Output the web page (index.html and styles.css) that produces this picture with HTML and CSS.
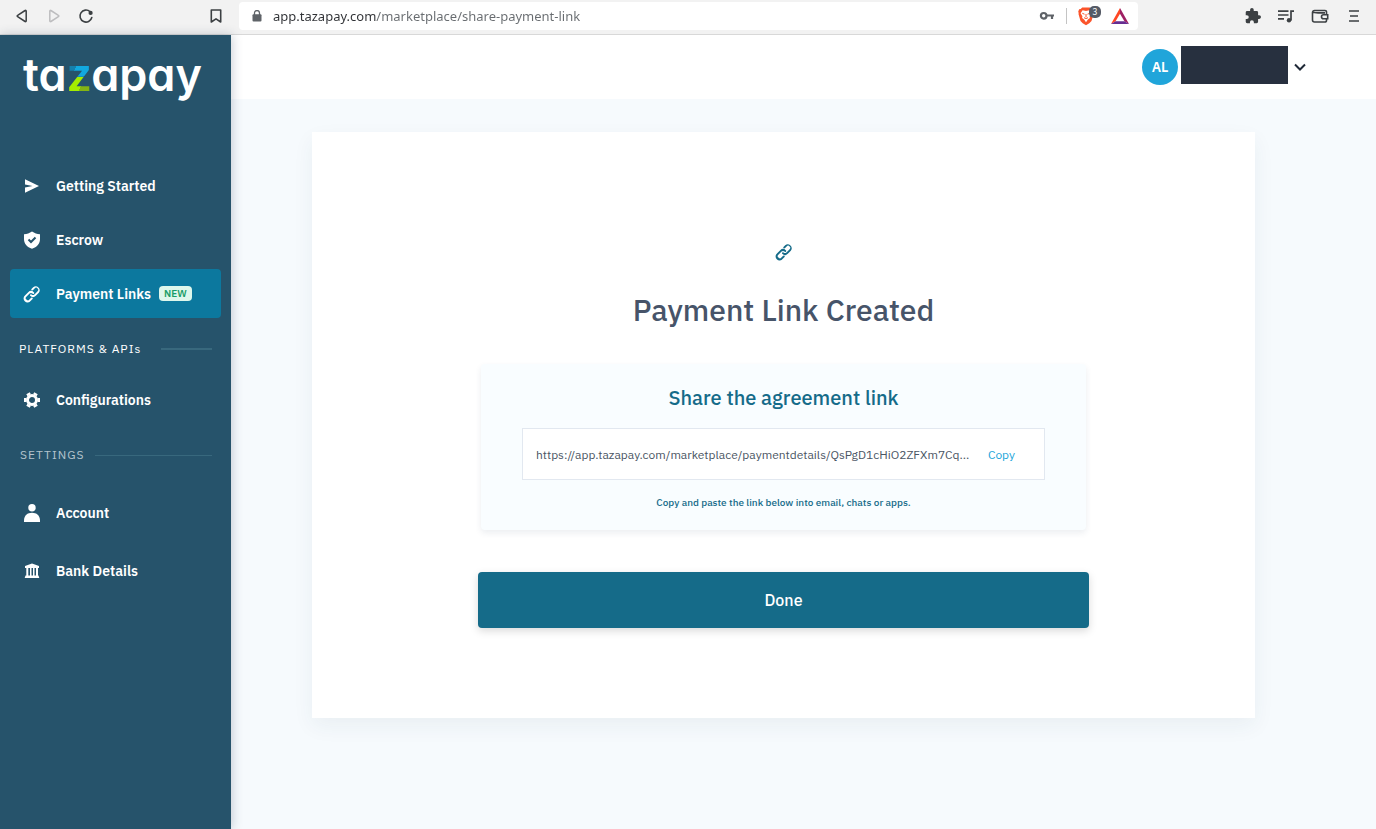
FILE: index.html
```
<!DOCTYPE html>
<html lang="en">
<head>
  <meta charset="UTF-8" />
  <meta name="viewport" content="width=device-width, initial-scale=1.0" />
  <title>Share Payment Link | Tazapay</title>
  <link rel="stylesheet" href="styles.css">
</head>
<body>
  <div class="browser-bar">
    <div class="browser-nav">
      <button type="button" aria-label="Back">
        <svg width="16" height="16" viewBox="0 0 16 16" fill="none" stroke="#3c4043" stroke-width="1.5" stroke-linejoin="round"><path d="M12.2 3v10a.7.7 0 0 1-1.1.5L3.6 8.7a.8.8 0 0 1 0-1.4l7.5-4.8a.7.7 0 0 1 1.1.5z"/></svg>
      </button>
      <button type="button" aria-label="Forward">
        <svg width="16" height="16" viewBox="0 0 16 16" fill="none" stroke="#bdbdbf" stroke-width="1.5" stroke-linejoin="round"><path d="M3.8 3v10a.7.7 0 0 0 1.1.5l7.5-4.8a.8.8 0 0 0 0-1.4L4.9 2.5a.7.7 0 0 0-1.1.5z"/></svg>
      </button>
      <button type="button" aria-label="Reload">
        <svg width="16" height="16" viewBox="0 0 16 16" fill="none"><path d="M13.8 9.5A6 6 0 1 1 12 3.6" stroke="#3c4043" stroke-width="1.6" stroke-linecap="round"/><circle cx="12.6" cy="4.9" r="2.1" fill="#3c4043"/></svg>
      </button>
    </div>
    <button type="button" class="bookmark" aria-label="Bookmark">
      <svg width="16" height="16" viewBox="0 0 16 16" fill="none" stroke="#3c4043" stroke-width="1.6" stroke-linejoin="round"><path d="M3.3 2h9.4v12L8 10.8 3.3 14z"/></svg>
    </button>
    <div class="address-bar">
      <svg width="10" height="12" viewBox="0 0 10 12"><path d="M2.5 5V3a2.5 2.5 0 0 1 5 0v2" fill="none" stroke="#5f6368" stroke-width="1.3"/><rect x=".5" y="4.3" width="9" height="7.2" rx="1" fill="#5f6368"/></svg>
      <input type="text" class="address" aria-label="Address" value="app.tazapay.com/marketplace/share-payment-link">
      <button type="button" aria-label="Saved passwords">
        <svg width="16" height="16" viewBox="0 0 16 16" fill="none" stroke="#5f6368"><circle cx="4.7" cy="7.8" r="2.8" stroke-width="2.2"/><path d="M7.5 7.5H15M13 7.5V11" stroke-width="2.2"/></svg>
      </button>
      <span class="divider"></span>
      <button type="button" class="shields" aria-label="Brave Shields">
        <svg width="18" height="20" viewBox="0 0 18 20"><path d="M5.2 1.5h7.6l1.5 1.6 1.6.2.9 2.4-.5 1.3.2 1-2 7-2.2 2.2L9 19.3l-3.3-2.1L3.5 15l-2-7 .2-1-.5-1.3.9-2.4 1.6-.2z" fill="#fb542b"/><path d="M5.6 4.3 9 5l3.4-.7 2 3-1.8 3 .3 1.8-2 1.4L9 16.2l-1.9-2.7-2-1.4.3-1.8-1.8-3z" fill="#fff"/><path d="m5.3 7.3 2.2.9M12.7 7.3l-2.2.9M9 8v3.2M7 11.7l2 .9 2-.9" stroke="#fb542b" fill="none"/></svg>
        <span class="shield-count">3</span>
      </button>
      <button type="button" aria-label="Brave Rewards">
        <svg width="18" height="16" viewBox="0 0 18 16"><path d="M9 0 0 16l4.6-2.8L9 5.7z" fill="#ff4724"/><path d="m9 0 9 16-4.6-2.8L9 5.7z" fill="#9e1f63"/><path d="M0 16h18l-4.6-2.8H4.6z" fill="#662d91"/></svg>
      </button>
    </div>
    <div class="browser-tools">
      <button type="button" aria-label="Extensions">
        <svg width="16" height="16" viewBox="1 1 22 22" fill="#3c4043"><path d="M20.5 11H19V7a2 2 0 0 0-2-2h-4V3.5a2.5 2.5 0 0 0-5 0V5H4a2 2 0 0 0-2 2v3.8h1.5a2.7 2.7 0 0 1 0 5.4H2V20a2 2 0 0 0 2 2h3.8v-1.5a2.7 2.7 0 0 1 5.4 0V22H17a2 2 0 0 0 2-2v-4h1.5a2.5 2.5 0 0 0 0-5z"/></svg>
      </button>
      <button type="button" aria-label="Playlist">
        <svg width="18" height="18" viewBox="0 0 18 18" fill="none" stroke="#3c4043" stroke-width="1.7"><path d="M1 4.2h10.5M1 8h10.5M1 11.8h6M14 13.5V4.2h3"/><circle cx="12" cy="13.3" r="2.2" fill="#3c4043" stroke="none"/></svg>
      </button>
      <button type="button" aria-label="Wallet">
        <svg width="18" height="18" viewBox="0 0 18 18" fill="none" stroke="#3c4043" stroke-width="1.6"><path d="M15.5 7V5A1.5 1.5 0 0 0 14 3.5H3.5a2 2 0 0 0-2 2V13a2 2 0 0 0 2 2H14a1.5 1.5 0 0 0 1.5-1.5V12M2 5c1 1 3 .9 6 .9h6"/><path d="M16.7 7.8h-4.2a2 2 0 0 0 0 4h4.2z"/></svg>
      </button>
      <button type="button" aria-label="Menu">
        <svg width="18" height="18" viewBox="0 0 18 18" fill="none" stroke="#3c4043" stroke-width="1.6"><path d="M4 4h10M5 9h8M4 14h10"/></svg>
      </button>
    </div>
  </div>

  <div class="app">
    <aside class="sidebar">
      <a href="#" class="logo">ta<span class="logo-z">z</span>apay</a>

      <nav class="menu">
        <a href="#" class="menu-item">
          <svg width="18" height="18" viewBox="0 0 18 18" fill="#fff"><path d="M2 2.2 16 9 2 15.8v-5.3L9.5 9 2 7.5z"/></svg>
          Getting Started
        </a>
        <a href="#" class="menu-item">
          <svg width="18" height="18" viewBox="0 0 18 18"><path d="M9 .5c2.5 1.7 5 2.5 8 2.7v5c0 4.3-3 7.8-8 9.5-5-1.7-8-5.2-8-9.5v-5C4 3 6.5 2.2 9 .5z" fill="#fff"/><path d="M5.5 8.5 8 11l4.5-4.5" fill="none" stroke="#26536b" stroke-width="2"/></svg>
          Escrow
        </a>
        <a href="#" class="menu-item active">
          <svg width="18" height="18" viewBox="1 1 18 18" fill="#fff"><path d="M12.6 4.6a2 2 0 1 1 2.8 2.8l-3 3a2 2 0 0 1-2.8 0 1 1 0 0 0-1.4 1.4 4 4 0 0 0 5.6 0l3-3a4 4 0 0 0-5.6-5.6l-1.5 1.5a1 1 0 1 0 1.4 1.4l1.5-1.5zm-5 5a2 2 0 0 1 2.8 0 1 1 0 1 0 1.4-1.4 4 4 0 0 0-5.6 0l-3 3a4 4 0 1 0 5.6 5.6l1.5-1.5a1 1 0 1 0-1.4-1.4l-1.5 1.5a2 2 0 1 1-2.8-2.8l3-3z"/></svg>
          Payment Links
          <span class="badge">NEW</span>
        </a>
      </nav>

      <h2 class="section-title platforms">PLATFORMS &amp; APIs</h2>
      <nav class="menu">
        <a href="#" class="menu-item">
          <svg width="18" height="18" viewBox="0 0 18 18" fill="none" stroke="#fff"><circle cx="9" cy="9" r="4.5" stroke-width="3"/><path d="M14.5 9H17M3.5 9H1M11.8 4.2l1.2-2M6.2 13.8l-1.2 2M11.8 13.8l1.2 2M6.2 4.2 5 2.2" stroke-width="4"/></svg>
          Configurations
        </a>
      </nav>

      <h2 class="section-title settings">SETTINGS</h2>
      <nav class="menu menu-settings">
        <a href="#" class="menu-item">
          <svg width="18" height="18" viewBox="0 0 18 18" fill="#fff"><circle cx="9" cy="3.7" r="3.7"/><path d="M1 18v-1.5c0-5 3.5-7.7 8-7.7s8 2.7 8 7.7V18z"/></svg>
          Account
        </a>
        <a href="#" class="menu-item">
          <svg width="18" height="18" viewBox="0 0 18 18" fill="#fff"><path d="m9 1.5 7 2.5v2H2V4zM3.3 6h2v7.5h-2zM7 6h1.5v7.5H7zM10 6h1.5v7.5H10zM13 6h2v7.5h-2zM2.5 13.5h13l.8 2.5H1.7z"/></svg>
          Bank Details
        </a>
      </nav>
    </aside>

    <div class="content">
      <header class="topbar">
        <span class="avatar">AL</span>
        <span class="user-name"></span>
        <button type="button" class="user-toggle" aria-label="Account menu">
          <svg width="14" height="10" viewBox="0 0 14 10" fill="none" stroke="#1f2937" stroke-width="2"><path d="m2 2.5 5 5 5-5"/></svg>
        </button>
      </header>

      <main class="main">
        <section class="card">
          <svg class="card-icon" width="18" height="18" viewBox="1 1 18 18" fill="#156b89"><path d="M12.6 4.6a2 2 0 1 1 2.8 2.8l-3 3a2 2 0 0 1-2.8 0 1 1 0 0 0-1.4 1.4 4 4 0 0 0 5.6 0l3-3a4 4 0 0 0-5.6-5.6l-1.5 1.5a1 1 0 1 0 1.4 1.4l1.5-1.5zm-5 5a2 2 0 0 1 2.8 0 1 1 0 1 0 1.4-1.4 4 4 0 0 0-5.6 0l-3 3a4 4 0 1 0 5.6 5.6l1.5-1.5a1 1 0 1 0-1.4-1.4l-1.5 1.5a2 2 0 1 1-2.8-2.8l3-3z"/></svg>
          <h1>Payment Link Created</h1>

          <div class="share-box">
            <label for="share-link">Share the agreement link</label>
            <div class="link-field">
              <input type="text" id="share-link" readonly value="https://app.tazapay.com/marketplace/paymentdetails/QsPgD1cHiO2ZFXm7Cq...">
              <button type="button" class="copy-button">Copy</button>
            </div>
            <p>Copy and paste the link below into email, chats or apps.</p>
          </div>

          <button type="button" class="done-button">Done</button>
        </section>
      </main>
    </div>
  </div>
</body>
</html>
```

FILE: styles.css
```
* {
  box-sizing: border-box;
}

body {
  margin: 0;
  min-height: 100vh;
  display: flex;
  flex-direction: column;
  font-family: "IBM Plex Sans", "Noto Sans", sans-serif;
  background-color: #f6fafd;
}

button {
  padding: 0;
  border: none;
  background: none;
  font-family: inherit;
  cursor: pointer;
}

svg {
  display: block;
  flex-shrink: 0;
}

a {
  color: inherit;
  text-decoration: none;
}

/* Browser bar */
.browser-bar {
  display: flex;
  align-items: center;
  height: 35px;
  padding: 0 13px 2px 14px;
  background-color: #f2f2f2;
  border-bottom: 1px solid #d8d8d8;
}

.browser-nav {
  display: flex;
  gap: 16px;
}

.bookmark {
  margin-left: auto;
}

.address-bar {
  display: flex;
  align-items: center;
  width: 899px;
  height: 28px;
  margin-left: 15px;
  padding: 0 9px 0 13px;
  background-color: white;
  border-radius: 4px;
}

/* domain in dark, path in grey */
.address {
  flex: 1;
  min-width: 0;
  margin-left: 11px;
  padding: 0;
  border: none;
  outline: none;
  font-family: "Noto Sans", sans-serif;
  font-size: 13px;
  color: transparent;
  background: linear-gradient(to right, #303236 103px, #686c70 103px);
  background-clip: text;
}

.divider {
  width: 1px;
  height: 16px;
  margin: 0 10px 0 11px;
  background-color: #c4c4c4;
}

.shields {
  position: relative;
  margin-right: 16px;
}

.shield-count {
  position: absolute;
  top: 0;
  left: 12px;
  width: 12px;
  height: 12px;
  border-radius: 5px;
  background-color: #555a66;
  color: white;
  font-size: 9px;
  line-height: 12px;
}

.browser-tools {
  display: flex;
  align-items: center;
  gap: 16px;
  margin-left: 107px;
}

/* Sidebar */
.app {
  display: flex;
  flex: 1;
}

.sidebar {
  z-index: 1;
  flex: 0 0 231px;
  padding: 12px 10px;
  background-color: #26536b;
  color: white;
  box-shadow: 1px 0 10px rgba(38, 60, 85, 0.25);
}

/* cv11 is the single-storey a */
.logo {
  display: block;
  margin: 0 0 58px 13px;
  font-family: Inter, sans-serif;
  font-size: 45px;
  font-weight: 600;
  line-height: 56px;
  font-feature-settings: "cv11";
}

.logo-z {
  color: transparent;
  background:
    linear-gradient(120deg, #1580ad 50%, #12a8df 50%) top / 100% 54% no-repeat,
    linear-gradient(120deg, #a4ec00 50%, #84b414 50%) bottom / 100% 46% no-repeat;
  background-clip: text;
}

.menu {
  display: flex;
  flex-direction: column;
  gap: 5px;
}

.menu-settings {
  gap: 9px;
}

.menu-item {
  display: flex;
  align-items: center;
  height: 49px;
  padding: 0 13px;
  border-radius: 4px;
  font-size: 14px;
  font-weight: 600;
}

.menu-item svg {
  margin-right: 15px;
}

.menu-item.active {
  background-color: #0c789e;
}

.badge {
  margin-left: 8px;
  padding: 0 5px;
  border-radius: 4px;
  background-color: #def7ec;
  color: #1a9d68;
  font-size: 10px;
  line-height: 15px;
}

.section-title {
  display: flex;
  align-items: center;
  margin: 21px 9px 16px;
  font-size: 12px;
  font-weight: 400;
  line-height: 20px;
  letter-spacing: 1px;
}

.section-title::after {
  content: "";
  flex: 1;
  margin-left: 20px;
  border-top: 2px solid #38687d;
}

.settings {
  margin-bottom: 23px;
  margin-left: 10px;
  color: #b4c4cd;
}

.settings::after {
  margin-left: 11px;
  border-top-width: 1px;
}

/* Content */
.content {
  flex: 1;
  min-width: 0;
}

.topbar {
  display: flex;
  align-items: center;
  justify-content: flex-end;
  height: 64px;
  padding: 0 69px;
  background-color: white;
}

.avatar {
  width: 36px;
  height: 36px;
  border-radius: 50%;
  background-color: #20a5da;
  color: white;
  font-size: 14px;
  font-weight: 600;
  line-height: 36px;
  text-align: center;
}

.user-name {
  width: 107px;
  height: 38px;
  margin: 0 5px 4px 3px;
  background-color: #27303f;
}

.main {
  padding: 33px 121px 40px 81px;
}

.card {
  display: flex;
  flex-direction: column;
  align-items: center;
  padding: 111px 40px 90px;
  background-color: white;
  box-shadow: 0 8px 20px rgba(40, 60, 80, 0.06);
}

h1 {
  margin: 29px 0 34px;
  color: #475469;
  font-size: 30px;
  font-weight: 500;
  line-height: 40px;
}

.share-box {
  width: 100%;
  max-width: 605px;
  padding: 20px 41px 17px;
  border-radius: 4px;
  background-color: #f9fdff;
  box-shadow: 0 3px 6px rgba(40, 70, 100, 0.09);
  color: #156b89;
  text-align: center;
}

.share-box label {
  display: block;
  font-size: 20px;
  font-weight: 500;
  line-height: 28px;
}

.link-field {
  display: flex;
  align-items: center;
  height: 52px;
  margin: 16px 0 13px;
  padding: 0 29px 0 13px;
  border: 1px solid #e2e8f0;
  background-color: white;
}

.link-field input {
  flex: 1;
  min-width: 0;
  margin-right: 16px;
  padding: 0;
  border: none;
  outline: none;
  color: #4a5563;
  font-family: inherit;
  font-size: 12px;
}

.copy-button {
  color: #20a5da;
  font-size: 12px;
}

.share-box p {
  margin: 0;
  font-size: 10px;
  font-weight: 500;
  line-height: 20px;
}

.done-button {
  width: 100%;
  max-width: 611px;
  height: 56px;
  margin-top: 42px;
  border-radius: 4px;
  background-color: #156b89;
  box-shadow: 0 3px 8px rgba(0, 0, 0, 0.15);
  color: white;
  font-size: 16px;
  font-weight: 500;
}
```
